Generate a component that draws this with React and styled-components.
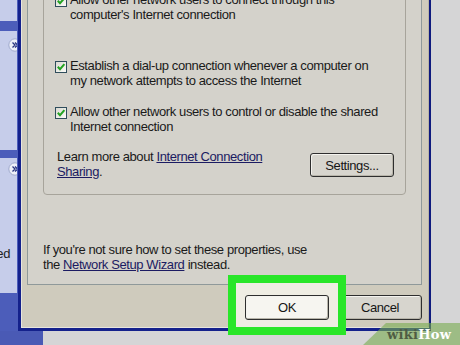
import React from "react";
import styled, { createGlobalStyle } from "styled-components";

const GlobalStyle = createGlobalStyle`
  html, body { margin: 0; padding: 0; }
  body {
    width: 460px;
    height: 345px;
    overflow: hidden;
    background: #d5d5d6;
    font-family: "Liberation Sans", Arial, sans-serif;
  }
`;

const Screen = styled.div`
  position: relative;
  width: 460px;
  height: 345px;
  overflow: hidden;
  display: grid;
  grid-template-columns: 18px 413px 1fr;
  grid-template-rows: 331px 1fr;
  background: #d5d5d6;
`;

const TaskPane = styled.aside`
  grid-column: 1;
  grid-row: 1;
  background: #4c5dba;
  display: flex;
  flex-direction: column;
  align-items: flex-start;
`;

const TaskPanel = styled.div`
  position: relative;
  width: 17px;
  height: ${(p) => p.$h}px;
  margin-top: ${(p) => p.$mt || 0}px;
  background: #c6cdea;
  overflow: hidden;
  display: flex;
  flex-direction: column;
  align-items: flex-end;
  flex-shrink: 0;
`;

const PanelChevron = styled.svg`
  position: absolute;
  right: -5px;
  top: ${(p) => p.$top}px;
`;

const PanelText = styled.span`
  margin-top: ${(p) => p.$mt}px;
  padding-right: 7px;
  font-size: 13px;
  line-height: 15px;
  letter-spacing: -0.4px;
  color: #222;
  white-space: nowrap;
`;

const BottomStrip = styled.div`
  grid-column: 1 / -1;
  grid-row: 2;
  display: flex;
  background: #d5d5d6;
`;

const StripBlue = styled.div`
  width: 43px;
  background: #4a5ab5;
`;

const Window = styled.section`
  grid-column: 2;
  grid-row: 1;
  box-sizing: border-box;
  display: flex;
  flex-direction: column;
  background: #cfcbbd;
  border-left: 3px solid #14218c;
  border-right: 2px solid #0e1a7e;
  border-bottom: 3px solid #14218c;
  box-shadow: inset 1px 0 0 #e7e5dd, inset 0 -1px 0 #e7e5dd, inset -1px 0 0 #b8b4a6;
  padding: 0 7px 8px 6px;
  font-size: 13px;
  line-height: 15px;
  letter-spacing: -0.4px;
  color: #1a1a1a;
`;

const TabPage = styled.div`
  flex: 1;
  min-height: 0;
  background: #d4d2cb;
  border: 1px solid #8f999a;
  border-top: none;
  padding: 0 15px;
  display: flex;
  flex-direction: column;
`;

const GroupBox = styled.div`
  margin-top: -40px;
  border: 1px solid #a7a49b;
  border-radius: 4px;
  padding: 31px 11px 15px 11px;
  display: flex;
  flex-direction: column;
`;

const Option = styled.div`
  display: flex;
  align-items: flex-start;
  gap: 3px;
  margin-top: ${(p) => p.$mt || 0}px;
`;

const CheckBox = styled.span`
  flex-shrink: 0;
  width: 12px;
  height: 12px;
  margin-top: 3px;
  box-sizing: border-box;
  border: 1px solid #2f4d5c;
  background: linear-gradient(135deg, #d9d9d2, #fbfbf8);
  display: flex;
  align-items: center;
  justify-content: center;
`;

const Label = styled.span`
  white-space: nowrap;
`;

const Link = styled.span`
  color: #1b1b62;
  text-decoration: underline;
`;

const LearnRow = styled.div`
  display: flex;
  justify-content: space-between;
  align-items: flex-start;
  margin-top: 15px;
`;

const LearnText = styled.span`
  margin-left: 2px;
  white-space: nowrap;
`;

const PushButton = styled.button`
  width: 84px;
  height: ${(p) => (p.$tall ? 25 : 24)}px;
  margin-top: ${(p) => p.$mt || 0}px;
  box-sizing: border-box;
  border: 1px solid #2e2e2e;
  border-radius: 3px;
  background: ${(p) => (p.$bright ? "#f6f5f0" : "#d7d5ce")};
  box-shadow: inset -1px -1px 0 #b8b5aa, inset 1px 1px 0 #f4f3ee;
  font-family: inherit;
  font-size: 13px;
  letter-spacing: -0.4px;
  color: #161616;
  padding: 0;
`;

const Hint = styled.p`
  margin: 47px 0 0 0;
  white-space: nowrap;
`;

const ButtonRow = styled.div`
  display: flex;
  justify-content: flex-end;
  gap: 9px;
  margin-top: 10px;
`;

const Highlight = styled.div`
  position: relative;
  z-index: 1;
  display: flex;
  &::before {
    content: "";
    position: absolute;
    top: -20px;
    bottom: -15px;
    left: -17px;
    right: -17px;
    border: 8px solid #29e629;
    background: #efede3;
    z-index: -1;
  }
`;

const Watermark = styled.div`
  position: absolute;
  right: 0;
  bottom: 0;
  width: 97px;
  height: 22px;
  z-index: 2;
  background: rgba(120, 172, 78, 0.6);
  clip-path: polygon(23px 0, 100% 0, 100% 100%, 0 100%);
  display: flex;
  align-items: center;
  padding-left: 24px;
  box-sizing: border-box;
  font-family: "DejaVu Serif", "Liberation Serif", serif;
  font-weight: bold;
  font-size: 13px;
  letter-spacing: 0.3px;
`;

const Wiki = styled.span`
  color: #4f5c43;
`;

const How = styled.span`
  color: #ffffff;
`;

const Check = () => (
  <svg width="10" height="10" viewBox="0 0 10 10">
    <path d="M1.8 4.8 L4 7.2 L8.4 2.2" fill="none" stroke="#23a323" strokeWidth="2" />
  </svg>
);

const Chevron = ({ top }) => (
  <PanelChevron $top={top} width="14" height="14" viewBox="0 0 14 14">
    <circle cx="7" cy="7" r="6.2" fill="#eef0f8" stroke="#9ea8cc" strokeWidth="1" />
    <path d="M4.5 4.5 L7 7 L4.5 9.5 M7 4.5 L9.5 7 L7 9.5" fill="none" stroke="#2a3680" strokeWidth="1.3" />
  </PanelChevron>
);

export default function App() {
  return (
    <>
      <GlobalStyle />
      <Screen>
        <TaskPane>
          <TaskPanel $h={21} />
          <TaskPanel $h={119} $mt={10}>
            <Chevron top={7} />
          </TaskPanel>
          <TaskPanel $h={135} $mt={8}>
            <Chevron top={4} />
            <PanelText $mt={88}>Shared</PanelText>
          </TaskPanel>
        </TaskPane>

        <Window>
          <TabPage>
            <GroupBox>
              <Option>
                <CheckBox><Check /></CheckBox>
                <Label>
                  Allow other network users to connect through this
                  <br />
                  computer's Internet connection
                </Label>
              </Option>
              <Option $mt={36}>
                <CheckBox><Check /></CheckBox>
                <Label>
                  Establish a dial-up connection whenever a computer on
                  <br />
                  my network attempts to access the Internet
                </Label>
              </Option>
              <Option $mt={16}>
                <CheckBox><Check /></CheckBox>
                <Label>
                  Allow other network users to control or disable the shared
                  <br />
                  Internet connection
                </Label>
              </Option>
              <LearnRow>
                <LearnText>
                  Learn more about <Link>Internet Connection</Link>
                  <br />
                  <Link>Sharing</Link>.
                </LearnText>
                <PushButton $mt={4}>Settings...</PushButton>
              </LearnRow>
            </GroupBox>
            <Hint>
              If you're not sure how to set these properties, use
              <br />
              the <Link>Network Setup Wizard</Link> instead.
            </Hint>
          </TabPage>
          <ButtonRow>
            <Highlight>
              <PushButton $tall $bright>OK</PushButton>
            </Highlight>
            <PushButton $tall>Cancel</PushButton>
          </ButtonRow>
        </Window>

        <BottomStrip>
          <StripBlue />
        </BottomStrip>

        <Watermark>
          <Wiki>wiki</Wiki>
          <How>How</How>
        </Watermark>
      </Screen>
    </>
  );
}
